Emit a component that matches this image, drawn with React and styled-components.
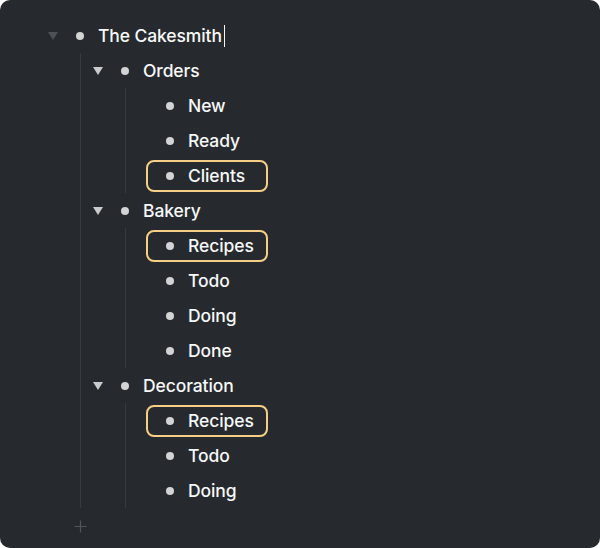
import React from 'react';
import styled, { createGlobalStyle } from 'styled-components';

const GlobalStyle = createGlobalStyle`
  html, body {
    margin: 0;
    padding: 0;
    background: #ffffff;
  }
`;

const Window = styled.div`
  width: 600px;
  height: 548px;
  box-sizing: border-box;
  background: #262a2e;
  border-radius: 10px;
  padding: 18px 0 0 44px;
  font-family: Inter, "Noto Sans", "Liberation Sans", sans-serif;
  overflow: hidden;
`;

const Row = styled.div`
  display: flex;
  align-items: center;
  height: 35px;
`;

const Toggle = styled.div`
  width: 18px;
  height: 35px;
  display: flex;
  align-items: center;
  justify-content: center;

  &::after {
    content: '';
    display: ${(p) => (p.$show ? 'block' : 'none')};
    width: 0;
    height: 0;
    border-left: 5px solid transparent;
    border-right: 5px solid transparent;
    border-top: 8px solid ${(p) => (p.$dim ? '#4d5257' : '#c9cbcd')};
    margin-top: 1px;
  }
`;

const Content = styled.div`
  position: relative;
  display: flex;
  align-items: center;

  &::before {
    content: '';
    display: ${(p) => (p.$marked ? 'block' : 'none')};
    position: absolute;
    left: -6px;
    top: 50%;
    width: 122px;
    height: 32px;
    box-sizing: border-box;
    transform: translateY(-50%);
    border: 2.5px solid #f6cf86;
    border-radius: 8px;
  }
`;

const BulletBox = styled.div`
  width: 36px;
  display: flex;
  justify-content: center;
`;

const Bullet = styled.span`
  width: 8px;
  height: 8px;
  border-radius: 50%;
  background: #d2d3d4;
`;

const Label = styled.span`
  color: #f7f8f9;
  font-size: 17.5px;
  font-weight: 500;
  letter-spacing: -0.1px;
  display: flex;
  align-items: center;
`;

const Caret = styled.span`
  display: inline-block;
  width: 1px;
  height: 22px;
  margin-left: 2px;
  background: #f5f6f7;
`;

const Children = styled.div`
  margin-left: 36px;
  padding-left: 8px;
  border-left: 1px solid #363b40;
`;

const AddRow = styled.div`
  height: 36px;
  display: flex;
  align-items: center;
  padding-left: 18px;
`;

const Plus = styled.div`
  width: 36px;
  display: flex;
  justify-content: center;
  margin-top: 1px;
`;

const tree = {
  title: 'The Cakesmith',
  root: true,
  children: [
    {
      title: 'Orders',
      children: [{ title: 'New' }, { title: 'Ready' }, { title: 'Clients', marked: true }],
    },
    {
      title: 'Bakery',
      children: [
        { title: 'Recipes', marked: true },
        { title: 'Todo' },
        { title: 'Doing' },
        { title: 'Done' },
      ],
    },
    {
      title: 'Decoration',
      children: [{ title: 'Recipes', marked: true }, { title: 'Todo' }, { title: 'Doing' }],
    },
  ],
};

function Node({ node }) {
  const hasKids = node.children && node.children.length > 0;
  return (
    <div>
      <Row>
        <Toggle $show={hasKids} $dim={node.root} />
        <Content $marked={node.marked}>
          <BulletBox>
            <Bullet />
          </BulletBox>
          <Label>
            {node.title}
            {node.root && <Caret />}
          </Label>
        </Content>
      </Row>
      {hasKids && (
        <Children>
          {node.children.map((child, i) => (
            <Node key={i} node={child} />
          ))}
        </Children>
      )}
    </div>
  );
}

export default function App() {
  return (
    <>
      <GlobalStyle />
      <Window>
        <Node node={tree} />
        <AddRow>
          <Plus>
            <svg width="13" height="13" viewBox="0 0 13 13">
              <path d="M6.5 0.5v12M0.5 6.5h12" stroke="#50555a" strokeWidth="1.2" fill="none" />
            </svg>
          </Plus>
        </AddRow>
      </Window>
    </>
  );
}
